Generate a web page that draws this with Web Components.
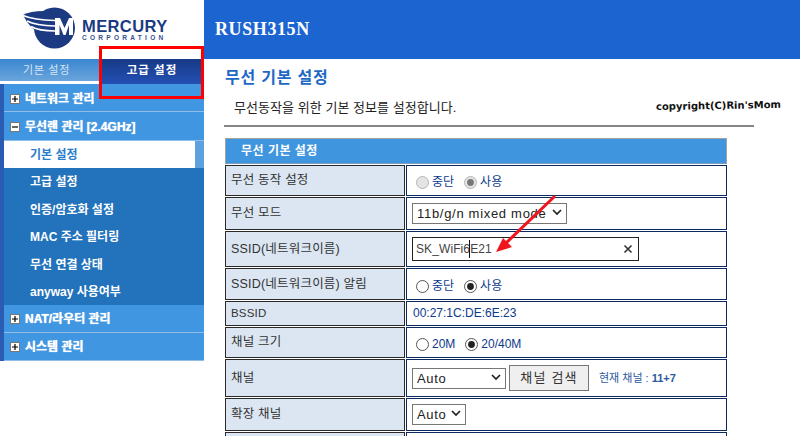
<!DOCTYPE html>
<html lang="ko">
<head>
<meta charset="utf-8">
<title>RUSH315N</title>
<style>
html,body{margin:0;padding:0;width:800px;height:436px;overflow:hidden;background:#fff;}
body{font-family:"Liberation Sans","Noto Sans CJK KR",sans-serif;}
</style>
</head>
<body>
<router-page>
	<side-bar slot="side">
		<menu-group state="plus">네트워크 관리</menu-group>
		<menu-group state="minus">무선랜 관리 [2.4GHz]</menu-group>
		<menu-item active>기본 설정</menu-item>
		<menu-item>고급 설정</menu-item>
		<menu-item>인증/암호화 설정</menu-item>
		<menu-item>MAC 주소 필터링</menu-item>
		<menu-item>무선 연결 상태</menu-item>
		<menu-item>anyway 사용여부</menu-item>
		<menu-group state="plus" tight>NAT/라우터 관리</menu-group>
		<menu-group state="plus" tight>시스템 관리</menu-group>
	</side-bar>
	<setting-table slot="main" caption="무선 기본 설정">
		<setting-row label="무선 동작 설정" h="31">
			<radio-opt disabled>중단</radio-opt><radio-opt checked disabled>사용</radio-opt>
		</setting-row>
		<setting-row label="무선 모드" h="33">
			<fake-select w="155">11b/g/n mixed mode</fake-select>
		</setting-row>
		<setting-row label="SSID(네트워크이름)" h="36">
			<ssid-input>SK_WiFi6E21</ssid-input>
		</setting-row>
		<setting-row label="SSID(네트워크이름) 알림" h="32">
			<radio-opt>중단</radio-opt><radio-opt checked>사용</radio-opt>
		</setting-row>
		<setting-row label="BSSID" h="25" latin><span class="blue">00:27:1C:DE:6E:23</span></setting-row>
		<setting-row label="채널 크기" h="31">
			<radio-opt>20M</radio-opt><radio-opt checked>20/40M</radio-opt>
		</setting-row>
		<setting-row label="채널" h="38">
			<fake-select w="94">Auto</fake-select>
			<scan-button>채널 검색</scan-button>
			<span class="now">현재 채널 : <b>11+7</b></span>
		</setting-row>
		<setting-row label="확장 채널" h="33">
			<fake-select w="54">Auto</fake-select>
		</setting-row>
		<setting-row label="" h="30"></setting-row>
	</setting-table>
</router-page>

<script>
(function(){
// small helper, every element below just hands its html to this.
function shadow(el, html){
	var root = el.attachShadow({mode:'open'});
	root.innerHTML = html;
	return root;
}

// logo is a drawing, the words stay real text
var LOGO = `
<svg width="60" height="50" viewBox="0 0 60 50" style="flex:none">
	<circle cx="34.500" cy="28" r="20.500" fill="#1b3a82"/>
	<path d="M3 15Q10 11 24 11L24 35Q10 30 3 15Z" fill="#1b3a82"/>
	<path d="M3 15.500Q14 20 35 20.500" fill="none" stroke="#fff" stroke-width="1.700"/>
	<path d="M7 21Q16 25.500 35 26" fill="none" stroke="#fff" stroke-width="1.700"/>
	<path d="M11 26.500Q19 31 35 31" fill="none" stroke="#fff" stroke-width="1.700"/>
	<path d="M35 18H40L44.500 28L49 18H53V35H49V25L45.500 35H43.500L39.500 25V35H35Z" fill="#fff"/>
</svg>`;

class RouterPage extends HTMLElement{
	constructor(){
		super();
		shadow(this, `
		<style>
			:host{display:block;position:relative;width:800px;height:436px;overflow:hidden;}
			.page{display:grid;grid-template-columns:204px 596px;height:436px;}
			.logo{height:59px;display:flex;align-items:flex-start;padding-left:20px;box-sizing:border-box;background:#fff;}
			.brand{margin:19px 0 0 2px;color:#1b3a82;line-height:1;}
			.brand b{display:block;font:bold 16.500px/14px "Liberation Sans",sans-serif;letter-spacing:.4px;white-space:nowrap;}
			.brand i{display:block;font:bold 6.500px/7px "Liberation Sans",sans-serif;font-style:normal;letter-spacing:3.300px;margin-top:1px;color:#33508f;white-space:nowrap;}
			.tabs{display:flex;height:25px;background:#fff;}
			.tab{box-sizing:border-box;text-align:center;font:11px/23px "Liberation Sans","Noto Sans CJK KR",sans-serif;}
			.tab.off{width:99px;height:23px;margin-right:3px;padding-right:6px;letter-spacing:.7px;color:#d5e5f5;background:linear-gradient(#3a86d0,#6aa5dc);border-bottom:1px solid #fff;}
			.tab.on{width:102px;padding-right:2px;letter-spacing:1px;color:#fff;font-size:11.500px;font-weight:bold;background:linear-gradient(#183a86,#2350b4);}
			.right{display:flex;flex-direction:column;min-width:0;}
			.top{height:59px;background:#1c65d1;color:#fff;font:bold 18px/59px "Liberation Serif",serif;padding-left:11px;box-sizing:border-box;letter-spacing:.6px;flex:none;}
			.body{padding:9px 0 0 21px;position:relative;}
			h1{margin:0;font:bold 16px/20px "Liberation Sans","Noto Sans CJK KR",sans-serif;color:#2167c5;letter-spacing:.8px;}
			.desc{margin:11px 0 0 9px;font:13px/17px "Liberation Sans","Noto Sans CJK KR",sans-serif;color:#222;height:21px;letter-spacing:.05px;}
			.copy{font:bold 10px/12px "DejaVu Sans",sans-serif;color:#111;position:absolute;left:452px;top:41px;transform:rotate(-1deg);white-space:nowrap;}
			.rule{width:530px;height:2px;background:#858585;margin:5px 0 11px -1px;}
			.mark{position:absolute;left:99px;top:46px;width:105px;height:53px;box-sizing:border-box;border:3px solid #f00;}
			.arrow{position:absolute;left:0;top:0;pointer-events:none;}
		</style>
		<div class="page">
			<div>
				<div class="logo">${LOGO}<div class="brand"><b>MERCURY</b><i>CORPORATION</i></div></div>
				<div class="tabs"><div class="tab off">기본 설정</div><div class="tab on">고급 설정</div></div>
				<slot name="side"></slot>
			</div>
			<div class="right">
				<div class="top">RUSH315N</div>
				<div class="body">
					<h1>무선 기본 설정</h1>
					<div class="desc">무선동작을 위한 기본 정보를 설정합니다.</div>
					<div class="copy">copyright(C)Rin'sMom</div>
					<div class="rule"></div>
					<slot name="main"></slot>
				</div>
			</div>
		</div>
		<div class="mark"></div>
		<svg class="arrow" width="800" height="436">
			<path d="M555 196L506 243" stroke="#f0141c" stroke-width="3" fill="none"/>
			<path d="M496 252L503 238L512 247Z" fill="#f0141c"/>
		</svg>`);
	}
}

class SideBar extends HTMLElement{
	constructor(){
		super();
		shadow(this, `
		<style>
			:host{display:block;width:204px;box-sizing:border-box;border-left:4px solid #2a5cb4;background:#2272bc;}
		</style>
		<slot></slot>`);
	}
}

class MenuGroup extends HTMLElement{
	constructor(){
		super();
		var minus = this.getAttribute('state') == 'minus';
		shadow(this, `
		<style>
			:host{display:flex;align-items:center;height:28px;box-sizing:border-box;background:#4096e0;border-bottom:1px solid #8fbde8;color:#fff;font:bold 12px/16px "Liberation Sans","Noto Sans CJK KR",sans-serif;padding:2px 0 0 6px;text-shadow:0 0 1px #fff;}
			:host([state=minus]){height:29px;}
			:host([tight]){padding-top:0;}
			svg{margin-right:5px;flex:none;}
		</style>
		<svg width="10" height="10" viewBox="0 0 10 10">
			<rect x=".5" y=".5" width="9" height="9" fill="#fff" stroke="#777"/>
			<path d="${minus ? 'M2 5H8' : 'M2 5H8M5 2V8'}" stroke="#000" stroke-width="1.2"/>
		</svg>
		<slot></slot>`);
	}
}

class MenuItem extends HTMLElement{
	constructor(){
		super();
		shadow(this, `
		<style>
			:host{display:block;height:27.400px;box-sizing:border-box;padding:2px 0 0 26px;color:#fff;font:bold 12px/25px "Liberation Sans","Noto Sans CJK KR",sans-serif;}
			:host([active]){background:linear-gradient(90deg,#fff 191px,#5da0e0 191px);color:#2a7ccc;}
		</style>
		<slot></slot>`);
	}
}

class SettingTable extends HTMLElement{
	constructor(){
		super();
		shadow(this, `
		<style>
			:host{display:block;width:502px;}
			.cap{height:26px;box-sizing:border-box;background:#4096de;border:1px solid #a3a3a3;border-bottom-color:#7a9cc0;color:#fff;font:bold 12px/24px "Liberation Sans","Noto Sans CJK KR",sans-serif;padding-left:15px;margin-bottom:1px;letter-spacing:.5px;}
			.rows{display:flex;flex-direction:column;gap:1px;}
		</style>
		<div class="cap">${this.getAttribute('caption')}</div>
		<div class="rows"><slot></slot></div>`);
	}
}

class SettingRow extends HTMLElement{
	constructor(){
		super();
		shadow(this, `
		<style>
			:host{display:grid;grid-template-columns:180px 321px;column-gap:1px;height:${this.getAttribute('h')}px;}
			.lab,.val{box-sizing:border-box;display:flex;align-items:center;border:1px solid #2a2a2a;}
			.lab{background:#dbe6f2;padding-left:5px;font:12.500px/15px "Liberation Sans","Noto Sans CJK KR",sans-serif;color:#333;letter-spacing:.2px;}
			:host([latin]) .lab{font-size:11.500px;}
			.val{border-color:#0d2a5e;padding-left:5px;font:12px/15px "Liberation Sans","Noto Sans CJK KR",sans-serif;color:#0b3a8c;}
			::slotted(.blue){font-size:12px;color:#0b3a8c;margin-left:1px;}
			::slotted(.now){font-size:11px;color:#2b57a0;margin-left:10px;}
		</style>
		<div class="lab">${this.getAttribute('label')}</div>
		<div class="val"><slot></slot></div>`);
	}
}

class RadioOpt extends HTMLElement{
	constructor(){
		super();
		var on = this.hasAttribute('checked'), dis = this.hasAttribute('disabled');
		var ring = dis ? '#b5b5b5' : '#555', fill = dis ? '#e4e4e4' : '#fff', dot = dis ? '#777' : '#222';
		shadow(this, `
		<style>
			:host{display:inline-flex;align-items:center;margin:4px 6px 0 4px;font:12px/15px "Liberation Sans","Noto Sans CJK KR",sans-serif;color:#0b3a8c;}
			svg{margin-right:3px;}
		</style>
		<svg width="13" height="13" viewBox="0 0 13 13">
			<circle cx="6.5" cy="6.5" r="6" fill="${fill}" stroke="${ring}"/>
			${on ? '<circle cx="6.5" cy="6.5" r="3.4" fill="'+dot+'"/>' : ''}
		</svg>
		<slot></slot>`);
	}
}

class FakeSelect extends HTMLElement{
	constructor(){
		super();
		shadow(this, `
		<style>
			:host{display:inline-flex;align-items:center;box-sizing:border-box;width:${this.getAttribute('w')}px;height:21px;border:1px solid #767676;background:#fff;color:#222;padding-left:4px;font:13px/15px "Liberation Sans",sans-serif;letter-spacing:.7px;white-space:nowrap;position:relative;flex:none;}
			svg{position:absolute;right:4px;top:5px;}
			span{overflow:hidden;}
		</style>
		<span><slot></slot></span>
		<svg width="10" height="7" viewBox="0 0 10 7"><path d="M1 1L5 5L9 1" fill="none" stroke="#222" stroke-width="1.7"/></svg>`);
	}
}

class SsidInput extends HTMLElement{
	constructor(){
		super();
		shadow(this, `
		<style>
			:host{display:flex;align-items:center;box-sizing:border-box;width:227px;height:24px;border:1px solid #222;background:#fff;color:#444;padding-left:3px;font:12px/15px "Liberation Sans",sans-serif;position:relative;letter-spacing:.1px;}
			.caret{position:absolute;left:56px;top:2px;width:1px;height:18px;background:#111;}
			svg{position:absolute;right:5px;top:6px;}
		</style>
		<slot></slot><div class="caret"></div>
		<svg width="10" height="10" viewBox="0 0 10 10"><path d="M1.5 1.5L8.5 8.5M8.5 1.5L1.5 8.5" stroke="#333" stroke-width="1.6"/></svg>`);
	}
}

class ScanButton extends HTMLElement{
	constructor(){
		super();
		shadow(this, `
		<style>
			:host{display:inline-block;box-sizing:border-box;width:80px;height:26px;margin-left:3px;border:1px solid #767676;background:#efefef;color:#333;text-align:center;font:13px/23px "Liberation Sans","Noto Sans CJK KR",sans-serif;letter-spacing:1.200px;flex:none;}
		</style>
		<slot></slot>`);
	}
}

customElements.define('router-page', RouterPage);
customElements.define('side-bar', SideBar);
customElements.define('menu-group', MenuGroup);
customElements.define('menu-item', MenuItem);
customElements.define('setting-table', SettingTable);
customElements.define('setting-row', SettingRow);
customElements.define('radio-opt', RadioOpt);
customElements.define('fake-select', FakeSelect);
customElements.define('ssid-input', SsidInput);
customElements.define('scan-button', ScanButton);
})();
</script>
</body>
</html>
